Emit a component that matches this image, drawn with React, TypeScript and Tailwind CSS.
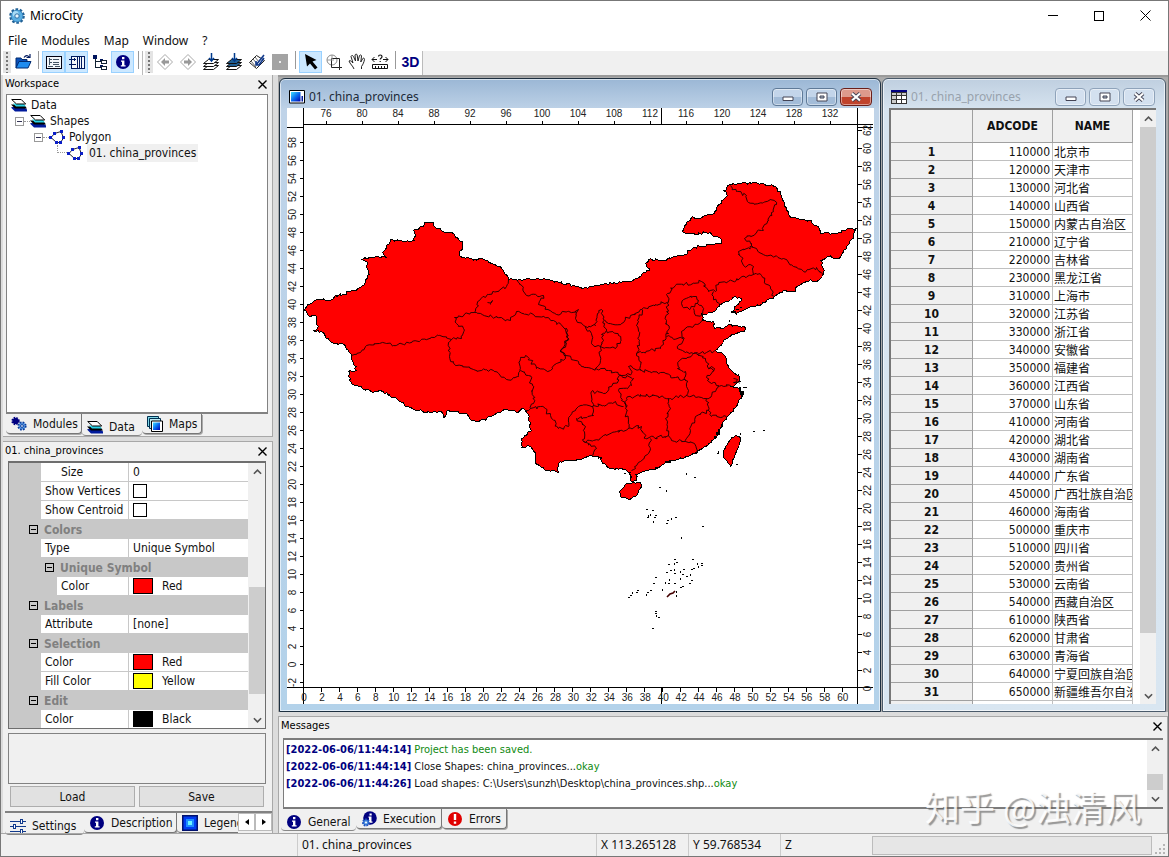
import React from "react";

type Pt = [number, number];

/* ---------- map geometry ---------- */

const MAINLAND =
  "304,310 307,304 313,301 320,299 325,300 330,300 335,295 343,294 351,290 363,285 365,279 369,274 367,268 367,262 361,259 376,256 386,257 383,254 384,250 388,244 390,239 405,241 414,240 413,230 423,226 424,222 433,222 434,226 443,231 454,234 462,244 459,255 465,258 483,259 500,266 508,279 546,279 556,281 579,287 583,288 605,283 630,281 641,275 649,270 645,263 650,258 658,260 663,260 675,256 683,255 693,247 711,244 721,243 720,238 711,234 705,232 695,234 686,233 682,231 686,222 692,216 700,218 714,213 717,205 727,195 723,190 731,184 755,182 774,186 780,193 790,217 808,220 818,226 820,233 836,233 846,229 856,228 853,236 846,246 839,258 828,256 820,260 823,268 822,276 816,281 810,279 798,285 795,291 783,290 774,296 761,304 746,308 736,314 733,310 736,305 741,298 735,296 730,300 719,304 713,311 707,313 701,313 702,320 713,321 714,328 723,328 728,324 745,327 744,331 733,334 723,342 715,350 725,356 730,369 739,377 740,381 731,386 740,389 741,395 736,406 728,415 721,426 716,436 705,446 695,453 683,458 668,461 656,468 643,471 635,474 636,480 630,480 630,472 623,469 610,468 602,463 601,457 591,455 581,459 560,461 558,463 558,472 546,470 535,463 535,455 530,446 521,447 521,438 530,431 529,416 523,408 516,412 506,409 490,416 485,420 471,420 466,413 448,410 443,417 441,411 430,412 413,409 400,401 380,390 373,392 351,383 348,371 356,370 351,355 345,345 330,341 323,332 313,330 317,328 316,316 308,315 304,310";

const ISLANDS = [
  "735,435 740,437 739,445 735,453 730,466 725,459 723,456 723,450 729,440 735,435",
  "619,491 626,483 640,482 641,486 635,496 628,499 620,496 619,491",
];

const BORDERS = [
  "351,355 360,352 366,345 386,343 393,345 420,340 438,335 451,339 461,338 463,328 456,323 454,317 474,312 479,300 488,294 506,286 508,279",
  "451,339 448,342 449,356 455,365 473,369 493,370 506,379 518,376 520,370 528,375 532,385 533,403 530,408 525,410",
  "474,312 510,320 516,311 533,314 553,320 566,328 568,338 560,351 565,358 556,363 550,370 536,368 525,355 520,358 519,370",
  "516,279 526,295 543,295 538,304 556,314 578,309 575,318 585,326 595,325 597,313 601,309 603,319 608,323 621,323 630,315 641,309 668,301",
  "585,326 591,333 591,343 600,346 615,348 620,341 618,335 606,330 603,320",
  "606,330 601,334 603,340 600,346 600,360 595,368 608,370 621,375",
  "566,328 568,338 560,351 565,355 578,361 581,366 591,368 595,368",
  "641,309 637,326 639,340 636,353 640,365 641,370",
  "668,301 666,320 668,333 660,348 636,353",
  "666,336 683,339 677,348 685,352 693,353 706,352 715,350",
  "683,339 681,331 703,320",
  "681,303 688,297 696,296 697,303 690,308 682,306 681,303",
  "697,303 701,305 702,314 695,315 693,308",
  "668,301 667,293 675,285 701,281 708,291 715,291 718,284 753,274 761,275 774,296",
  "713,291 713,296 719,303",
  "753,274 753,266 743,265 738,251 753,247 756,248 765,255 783,258 793,266 803,271 816,267 822,275",
  "730,185 736,191 746,195 748,202 763,202 770,199 776,204 768,220 761,230 744,238 751,243 753,247",
  "530,408 540,406 550,415 558,428 568,426 570,415 575,410 578,406 593,405 591,391 603,393 611,386 621,375",
  "621,375 633,378 631,385 618,390 621,400 626,406",
  "641,370 628,366 631,373 621,375",
  "641,370 660,372 675,377 685,380",
  "685,380 685,371 677,368 679,360 686,358 693,353",
  "693,353 705,358 708,368 713,370 706,377 711,383 721,385 731,386",
  "718,385 715,391 706,398",
  "685,380 688,390 686,395 706,398",
  "706,398 708,410 711,416 726,416",
  "708,410 695,416 690,430 685,441",
  "685,441 694,443 696,452",
  "626,398 640,394 658,396 670,398 686,395",
  "668,398 670,408 665,418 668,435 671,440 685,441",
  "626,398 625,408 628,428",
  "593,405 603,405 615,401 623,406",
  "593,405 593,415 576,418 585,426 583,441 596,448 591,455",
  "583,441 593,440 603,435 628,428 641,426 645,438 668,435",
  "650,438 648,453 640,461 631,470",
  "708,368 711,366 714,368 713,371",
  "733,378 737,379 733,382 739,383",
  "487,302 492,300 490,304",
];

const ISLETS: Pt[] = [
  [646, 509], [648, 515], [647, 517], [655, 515], [653, 521], [652, 510], [654, 517], [650, 514],
  [667, 520], [666, 523], [671, 518], [675, 517], [702, 526], [681, 537], [674, 559], [668, 564],
  [674, 563], [676, 562], [692, 559], [697, 563], [701, 563], [701, 565], [698, 566], [666, 572],
  [670, 570], [674, 569], [674, 573], [683, 569], [680, 571], [682, 574], [686, 576], [690, 574],
  [691, 569], [693, 568], [669, 579], [655, 577], [653, 583], [665, 582], [668, 583], [674, 583],
  [680, 578], [689, 583], [691, 580], [662, 589], [650, 590], [647, 592], [646, 594], [637, 590],
  [636, 592], [632, 592], [630, 595], [628, 597], [676, 591], [680, 587], [682, 586], [676, 595],
  [655, 611], [655, 613], [656, 615], [658, 617], [652, 628], [740, 433], [753, 431], [763, 430],
  [718, 451], [717, 453], [736, 464], [686, 473], [694, 477], [659, 487], [666, 490], [646, 509],
  [624, 473], [729, 320], [745, 387], [734, 312], [731, 311], [654, 469],
];

/* Dense archipelagos close to the coast: x, y, width, height. */
const CLUSTERS: [number, number, number, number][] = [
  [740, 391, 4, 4], [741, 394, 2, 3], [743, 387, 4, 1], [739, 387, 2, 2], [716, 432, 4, 3],
  [718, 429, 2, 3], [714, 436, 3, 2], [721, 424, 2, 3], [665, 461, 6, 2], [670, 460, 4, 1],
  [655, 467, 3, 2], [695, 452, 2, 2], [732, 311, 4, 2], [736, 309, 3, 1], [740, 307, 2, 1],
];

function parse(s: string): Pt[] {
  return s.split(" ").map((p) => p.split(",").map(Number) as Pt);
}

/* Adds small deterministic bends so that coasts and borders look natural. */
function roughen(source: string, amp: number, seed: number): string {
  let state = seed * 7919 + 17;
  const rnd = () => {
    state = (state * 1103515245 + 12345) % 2147483648;
    return state / 2147483648 - 0.5;
  };
  const pts = parse(source);
  const out: string[] = [pts[0].join(",")];
  for (let i = 1; i < pts.length; i++) {
    const [ax, ay] = pts[i - 1];
    const [bx, by] = pts[i];
    const len = Math.hypot(bx - ax, by - ay);
    const n = Math.max(1, Math.round(len / 2.2));
    for (let k = 1; k < n; k++) {
      const t = k / n;
      const x = ax + (bx - ax) * t + rnd() * amp;
      const y = ay + (by - ay) * t + rnd() * amp;
      out.push(`${x.toFixed(1)},${y.toFixed(1)}`);
    }
    out.push(`${bx},${by}`);
  }
  return out.join(" ");
}

const range = (from: number, to: number, step: number) =>
  Array.from({ length: Math.floor((to - from) / step) + 1 }, (_, i) => from + i * step);

function MapCanvas() {
  return (
    <svg viewBox="287 108 587 596" className="block h-full w-full bg-white" preserveAspectRatio="xMinYMin meet" role="img" aria-label="china_provinces">
      <g shapeRendering="crispEdges">
        <polygon points={roughen(MAINLAND, 2.4, 3)} fill="#f00" stroke="#000" strokeWidth="1" transform="translate(.5 .5)" />
        {ISLANDS.map((s, i) => (
          <polygon key={i} points={roughen(s, 1.2, i + 5)} fill="#f00" stroke="#000" strokeWidth="1" transform="translate(.5 .5)" />
        ))}
      </g>
      {BORDERS.map((s, i) => (
        <polyline key={i} points={roughen(s, 3.4, i + 11)} fill="none" stroke="#1c0000" strokeWidth=".9" transform="translate(.5 .5)" />
      ))}
      <path d="M667 597l3-3 3-1 2-2" stroke="#400" strokeWidth="1.6" fill="none" />
      <g shapeRendering="crispEdges" fill="#000">
        {ISLETS.map(([x, y], i) => (
          <rect key={i} x={x} y={y} width={i % 3 === 1 ? 1 : 2} height={i % 3 === 1 ? 2 : 1} />
        ))}
        {CLUSTERS.map(([x, y, w, h], i) => (
          <rect key={i} x={x} y={y} width={w} height={h} />
        ))}
      </g>
      <g stroke="#000" strokeWidth="1" shapeRendering="crispEdges" fill="none">
        <path d="M303.5 108V704M857.5 108V704M287 687.5H873M303 124.5H873M287 127.5H303M857 127.5H873M661.5 108V124M661.5 687V704" />
        {range(76, 132, 4).map((v) => (
          <path key={`t${v}`} d={`M${326.5 + (v - 76) * 9} 121V124`} />
        ))}
        {range(0, 60, 2).map((v) => (
          <path key={`b${v}`} d={`M${Math.round(303 + v * 8.98) + 0.5} 688V692`} />
        ))}
        {range(-2, 58, 2).map((v) => (
          <path key={`l${v}`} d={`M300 ${142.5 + (58 - v) * 9}H303`} />
        ))}
        {range(0, 62, 2).map((v) => (
          <path key={`r${v}`} d={`M858 ${148.5 + (60 - v) * 9 - (v === 0 ? 1 : 0)}H862`} />
        ))}
      </g>
      <g className="font-['Liberation_Sans',sans-serif] text-[10px]" fill="#222" textAnchor="middle">
        {range(76, 132, 4).map((v) => (
          <text key={`t${v}`} x={326 + (v - 76) * 9} y="117">{v}</text>
        ))}
        {range(0, 60, 2).map((v) => (
          <text key={`b${v}`} x={304 + v * 8.98} y="701">{v}</text>
        ))}
        {range(-2, 58, 2).map((v) => (
          <text key={`l${v}`} transform={`translate(296 ${142.5 + (58 - v) * 9}) rotate(-90)`}>{v}</text>
        ))}
        {range(0, 62, 2).map((v) => (
          <text key={`r${v}`} transform={`translate(871 ${148.5 + (60 - v) * 9}) rotate(-90)`}>{v}</text>
        ))}
      </g>
    </svg>
  );
}

/* ---------- icons ---------- */

function GearIcon({ className }: { className: string }) {
  return (
    <svg viewBox="0 0 16 16" className={className} aria-hidden="true">
      <circle cx="8" cy="8" r="6.6" fill="none" stroke="#1f5f94" strokeWidth="2.4" strokeDasharray="2.6 1.6" />
      <circle cx="8" cy="8" r="5.9" fill="#5aaee2" stroke="#2b78b4" strokeWidth=".8" />
      <circle cx="6.6" cy="6" r="3" fill="#a9dcf6" />
      <circle cx="8" cy="8" r="2.2" fill="#eaf6fd" stroke="#2b6ea6" />
    </svg>
  );
}

function InfoIcon({ className = "size-4" }: { className?: string }) {
  return (
    <svg viewBox="0 0 16 16" className={className} aria-hidden="true">
      <circle cx="8" cy="8" r="7" fill="#000080" />
      <path d="M7 3h2.4v2.2H7zM6 6.4h3.4v4.8h1.2v1.4H5.8v-1.4H7V7.8H6z" fill="#fff" />
    </svg>
  );
}

function LayersIcon({ arrow = false, fill = "#fff" }: { arrow?: boolean; fill?: string }) {
  return (
    <svg viewBox="0 0 18 18" className="size-[18px]" aria-hidden="true">
      <g stroke="#111" strokeWidth="1" fill="#fff">
        <path d="M1.5 16.5l5-4h10l-5 4z" />
        <path d="M1.5 13.5l5-4h10l-5 4z" fill={fill} />
        <path d="M1.5 10.5l5-4h10l-5 4z" fill={fill} />
      </g>
      {arrow && <path d="M9.500 0v7M7 5l2.500 3L12 5" stroke="#003a8c" strokeWidth="1.500" fill="none" />}
    </svg>
  );
}

function DataIcon() {
  return (
    <svg viewBox="0 0 16 14" className="h-3.5 w-4 shrink-0" aria-hidden="true">
      <path d="M0 9.500l4 4h12v-2l-4-3H3z" fill="#001a9c" />
      <path d="M0 6.500l4 4h12l-3-4z" fill="#000" />
      <path d="M2 5.500l3 3h10l-3-3z" fill="#2ad4e8" />
      <path d="M.7 1.500h9.500l4.500 4.500H5.500z" fill="#fff" stroke="#000" strokeWidth="1" />
    </svg>
  );
}

function PolygonIcon() {
  return (
    <svg viewBox="0 0 16 16" className="size-4 shrink-0" aria-hidden="true">
      <path d="M2 8.5l3.500-4 6.500-2 2.500 6.500-3 4.500h-4z" fill="#fff" stroke="#223" />
      <g shapeRendering="crispEdges" fill="#0a1ec8">
        <path d="M0 7h3v3H0zM4 3h3v3H4zM11 1h3v3h-3zM13 7h3v3h-3zM10 12h3v3h-3zM6 12h3v3H6z" />
      </g>
    </svg>
  );
}

function MapIcon() {
  return (
    <svg viewBox="0 0 16 14" className="h-3.5 w-4 shrink-0" aria-hidden="true">
      <defs>
        <linearGradient id="mapBlue" x1="0" y1="0" x2="1" y2="1">
          <stop offset="0" stopColor="#3fe0ff" />
          <stop offset=".5" stopColor="#0a6cf0" />
          <stop offset="1" stopColor="#0000b0" />
        </linearGradient>
      </defs>
      <path d="M.5.5h15v12.500H.5z" fill="#fff" stroke="#000" />
      <path d="M2 2h9.500v9.500H2z" fill="url(#mapBlue)" />
      <path d="M12.500 6h1.500v5.500h-1.500z" fill="#001a9c" />
    </svg>
  );
}

function MapsIcon() {
  return (
    <svg viewBox="0 0 16 16" className="size-4 shrink-0" aria-hidden="true">
      <path d="M.5.500h11v10H.5z" fill="#7fd8e8" stroke="#003050" />
      <path d="M2.500 2.500h11v10h-11z" fill="#bfeaf4" stroke="#003050" />
      <path d="M4.500 5h11v10.500h-11z" fill="#fff" stroke="#000" />
      <path d="M6 6.500h7v7.500H6z" fill="url(#mapBlue)" />
    </svg>
  );
}

function ModulesIcon() {
  return (
    <svg viewBox="0 0 16 16" className="size-4 shrink-0" aria-hidden="true">
      <circle cx="4.500" cy="5" r="3.100" fill="#000080" stroke="#000080" strokeWidth="2.200" strokeDasharray="1.500 1" />
      <circle cx="4.500" cy="5" r="2.600" fill="#000080" />
      <circle cx="11" cy="10" r="3.400" fill="#4a90e0" stroke="#0a3c9c" strokeWidth="2.400" strokeDasharray="1.600 1.100" />
      <circle cx="11" cy="10" r="2.800" fill="#5a9ce8" />
      <circle cx="11" cy="10" r="1.400" fill="#fff" stroke="#0a3c9c" />
    </svg>
  );
}

function SettingsIcon() {
  return (
    <svg viewBox="0 0 16 16" className="size-4 shrink-0" shapeRendering="crispEdges" aria-hidden="true">
      <path d="M0 3.500h16M0 8.500h16M0 13.500h16" stroke="#123a8c" strokeWidth="1.200" />
      <path d="M10.500 1.500h2v4h-2zM3.500 6.500h2v4h-2zM10.500 11.500h2v4h-2z" fill="#fff" stroke="#123a8c" />
    </svg>
  );
}

function LegendIcon() {
  return (
    <svg viewBox="0 0 16 16" className="size-4 shrink-0" aria-hidden="true">
      <path d="M0 0h16v16H0z" fill="#00106e" />
      <path d="M1.500 1.500h13v13h-13z" fill="#003cf0" />
      <path d="M4 4h8v8H4z" fill="#1c8cff" />
      <path d="M6 6h4v4H6z" fill="#6cf4ff" />
    </svg>
  );
}

function ExecutionIcon() {
  return (
    <svg viewBox="0 0 16 16" className="size-4 shrink-0" aria-hidden="true">
      <circle cx="9" cy="7" r="6.800" fill="#000080" />
      <path d="M8.500 2.500h2.200v2H8.500zM7.500 5.500h3v5h1v1.200H8V6.800h-.5z" fill="#fff" />
      <circle cx="5" cy="11.500" r="3" fill="#4a90e0" stroke="#1c50c0" strokeWidth="2" strokeDasharray="1.600 1" />
      <circle cx="5" cy="11.500" r="1" fill="#fff" />
    </svg>
  );
}

function ErrorIcon() {
  return (
    <svg viewBox="0 0 16 16" className="size-4 shrink-0" aria-hidden="true">
      <circle cx="8" cy="8" r="7" fill="#e00000" />
      <path d="M6.800 3h2.400v6H6.800zM6.800 10.500h2.400v2.200H6.800z" fill="#fff" />
    </svg>
  );
}

function TableIcon() {
  return (
    <svg viewBox="0 0 16 14" className="h-3.5 w-4 shrink-0" shapeRendering="crispEdges" aria-hidden="true">
      <path d="M0 0h16v14H0z" fill="#333" />
      <path d="M0 0h16v2H0z" fill="#000080" />
      <path d="M1 3h4v2H1zM6 3h4v2H6zM11 3h4v2h-4zM1 6h4v3H1zM1 10h4v3H1z" fill="#ccc" />
      <path d="M6 6h4v3H6zM11 6h4v3h-4zM6 10h4v3H6zM11 10h4v3h-4z" fill="#fff" />
    </svg>
  );
}

const tool = "size-[18px]";

const icons = {
  open: (
    <svg viewBox="0 0 18 18" className={tool}>
      <path d="M2 15V5h5l1 1.500h5V9" fill="#0a50b8" stroke="#002a70" />
      <path d="M2 15l3-6.500h12L14 15z" fill="#1f8cf0" stroke="#002a70" />
      <path d="M10 4.500c2-3 4-2 5-.5M16 1v3.500h-3.500" fill="none" stroke="#001a60" strokeWidth="1.200" />
    </svg>
  ),
  list: (
    <svg viewBox="0 0 18 18" className={tool} shapeRendering="crispEdges">
      <path d="M1.500 3.500h15v12h-15z" fill="#f4f8fc" stroke="#001" />
      <path d="M4.500 5v7M5 6.500h2M5 9.500h2M8 6.500h6M8 9.500h6M8 11.500h6M3 13.500h5M10 13.500h5" stroke="#456" strokeWidth="1" fill="none" />
    </svg>
  ),
  props: (
    <svg viewBox="0 0 18 18" className={tool} shapeRendering="crispEdges">
      <path d="M3.500 3.500h13v12h-13z" fill="#f4f8fc" stroke="#001a60" />
      <path d="M1 6.500h7M1 11.500h7M6.500 5v3M3.500 10v3M9.500 4v11M11.500 4v11M13.500 4v11" stroke="#001a60" />
    </svg>
  ),
  tree: (
    <svg viewBox="0 0 18 18" className={tool} shapeRendering="crispEdges">
      <path d="M4.500 5v9.500h5M4.500 8.500h5" stroke="#123" fill="none" />
      <path d="M2 2h4v4H2zM9 6h3v2H9zM9 12h3v2H9z" fill="#00145c" />
      <path d="M10.500 7.500h5v3h-5zM10.500 13.500h5v3h-5z" fill="#fff" stroke="#123" />
    </svg>
  ),
  hand: (
    <svg viewBox="0 0 18 18" className={tool}>
      <path d="M6 16c-1-3-4-5-5-8 1-1 2 0 4 2L3 3.500c.5-1.500 2-1 2.500 0L7.500 8 7 2c.5-1.200 2-1 2.200 0L10 8l1.500-5.500c.8-1 2-.5 2 .5L12.800 9l2-3.500c.8-.8 1.800-.2 1.700.8-.5 3-1.500 5-3 7.200V16" fill="#fff" stroke="#222" strokeWidth="1" />
    </svg>
  ),
  cursor: (
    <svg viewBox="0 0 18 18" className={tool}>
      <path d="M3 1l2 12.500 3-3 5 6 2.500-2-5-6 4-1.500z" fill="#000" />
    </svg>
  ),
  zoom: (
    <svg viewBox="0 0 18 18" className={tool} fill="none">
      <circle cx="7" cy="7" r="5" stroke="#888" />
      <path d="M6.500 5.500h8v9h-8zM14.500 14.500V17M14.500 14.500H17" stroke="#222" />
      <path d="M2 7h7M7 2v4" stroke="#999" />
    </svg>
  ),
  measure: (
    <svg viewBox="0 0 18 18" className={tool} fill="none">
      <path d="M1.500 11.500h15v4h-15z" stroke="#111" />
      <path d="M4.500 13v2M7.500 13v2M10.500 13v2M13.500 13v2M1 6.500h5M12 6.500h5M3.500 4L1 6.500 3.500 9M14.500 4L17 6.500 14.500 9" stroke="#111" />
      <path d="M7.500 3.500c0-2 3.500-2 3.500 0S9.200 5 9.200 6.500M9.200 8v1" stroke="#111" strokeWidth="1.200" />
    </svg>
  ),
  brush: (
    <svg viewBox="0 0 18 18" className={tool}>
      <path d="M1.500 9.500l7-7 8 5-8 8z" fill="#fff" stroke="#222" />
      <path d="M3 8l5 6M5 6l5 6M7 4l4 5" stroke="#444" strokeWidth=".8" />
      <path d="M16 2l-8 10M16 5l-5 7M8 8v4h4" stroke="#123a8c" strokeWidth="1.600" fill="none" />
    </svg>
  ),
  block: (
    <svg viewBox="0 0 18 18" className={tool} shapeRendering="crispEdges">
      <path d="M1 1h16v16H1z" fill="#a3a3a3" />
      <path d="M8 8h2v2H8z" fill="#eee" />
    </svg>
  ),
};

function DiamondArrow({ right = false }: { right?: boolean }) {
  return (
    <svg viewBox="0 0 18 18" className="size-[18px]" aria-hidden="true">
      <path d="M9 1.500L16.500 9 9 16.500 1.500 9z" fill="none" stroke="#aaa" />
      <path d={right ? "M5 7.500h4V5l4 4-4 4v-2.500H5z" : "M13 7.500H9V5L5 9l4 4v-2.500h4z"} fill="#999" />
    </svg>
  );
}

function CloseIcon({ className = "size-[11px]" }: { className?: string }) {
  return (
    <svg viewBox="0 0 11 11" className={className} aria-hidden="true">
      <path d="M1.500 1.500l8 8M9.500 1.500l-8 8" stroke="#000" strokeWidth="1.400" />
    </svg>
  );
}

function Chevron({ down = false }: { down?: boolean }) {
  return (
    <svg viewBox="0 0 10 6" className="h-1.5 w-[9px]" aria-hidden="true">
      <path d={down ? "M1 1l4 4 4-4" : "M1 5l4-4 4 4"} fill="none" stroke="#555" strokeWidth="1.800" />
    </svg>
  );
}

/* ---------- shared pieces ---------- */

const TAHOMA = "font-['DejaVu_Sans_Condensed','DejaVu_Sans',sans-serif]";
const SEGOE = "font-['Noto_Sans','Open_Sans',sans-serif]";

function ScrollBar({ thumb }: { thumb: string }) {
  return (
    <div className="flex w-4 shrink-0 flex-col bg-[#f0f0f0]">
      <button aria-label="Scroll up" className="flex h-[17px] items-center justify-center"><Chevron /></button>
      <div className="relative flex-1"><div className={`absolute inset-x-0 bg-[#cdcdcd] ${thumb}`} /></div>
      <button aria-label="Scroll down" className="flex h-[17px] items-center justify-center"><Chevron down /></button>
    </div>
  );
}

function ToolButton({ label, active = false, children }: { label: string; active?: boolean; children: React.ReactNode }) {
  return (
    <button
      aria-label={label}
      className={`flex h-[22px] w-[23px] items-center justify-center ${active ? "border border-[#99d1ff] bg-[#cce8ff]" : ""}`}
    >
      {children}
    </button>
  );
}

function Grip() {
  return <div className="h-[22px] w-2 bg-[#e4e4e4] bg-[radial-gradient(circle,#777_1px,transparent_1px)] bg-[length:8px_4px]" />;
}

function ToolSep() {
  return <div className="flex w-2 justify-center"><div className="h-[18px] w-px bg-[#999]" /></div>;
}

function PanelHeader({ title }: { title: string }) {
  return (
    <div className="flex h-[18px] shrink-0 items-center justify-between pl-0.5 pr-1 pt-px text-[11px] text-black">
      <h2>{title}</h2>
      <button aria-label={`Close ${title}`}><CloseIcon /></button>
    </div>
  );
}

function Tab({ label, active = false, className = "", children }: { label: string; active?: boolean; className?: string; children: React.ReactNode }) {
  return (
    <button
      className={`flex shrink-0 items-center gap-1.5 overflow-hidden whitespace-nowrap rounded-b-sm pl-[5px] ${
        active ? "h-[22px] border-b border-[#888] bg-[#f0f0f0] pt-1" : "h-[20px] border-b border-r border-[#777] bg-[#f0f0f0] shadow-[1px_1px_0_#aaa]"
      } ${className}`}
    >
      {children}
      <span>{label}</span>
    </button>
  );
}

/* ---------- workspace ---------- */

function TreeToggle() {
  return (
    <span className="flex size-[9px] shrink-0 items-center justify-center border border-[#999] bg-white">
      <span className="h-px w-[5px] bg-[#335]" />
    </span>
  );
}

function Workspace() {
  return (
    <section className="flex h-[362px] shrink-0 flex-col border-b border-r border-[#a8a8a8] bg-[#f0f0f0]">
      <PanelHeader title="Workspace" />
      <div className="ml-[3px] mr-1 mt-px flex min-h-0 flex-1 flex-col">
        <ul className="flex-1 border border-b-2 border-[#828282] bg-white pt-0.5">
          <li className="flex h-4 items-center gap-1 pl-1"><DataIcon />Data</li>
          <li className="flex h-4 items-center pl-2">
            <TreeToggle /><span className="w-1.5 border-t border-dotted border-[#999]" />
            <DataIcon /><span className="ml-1">Shapes</span>
          </li>
          <li className="flex h-4 items-center pl-[27px]">
            <TreeToggle /><span className="w-1.5 border-t border-dotted border-[#999]" />
            <PolygonIcon /><span className="ml-1">Polygon</span>
          </li>
          <li className="flex h-4 items-center pl-[50px]">
            <span className="mb-2 h-2 w-2.5 border-b border-l border-dotted border-[#999]" />
            <PolygonIcon /><span className="ml-1 bg-[#f0f0f0] px-0.5">01. china_provinces</span>
          </li>
        </ul>
        <div className="flex h-[22px] items-start">
          <Tab label="Modules" className="w-[76px]"><ModulesIcon /></Tab>
          <Tab label="Data" active className="w-[60px]"><DataIcon /></Tab>
          <Tab label="Maps" className="w-[60px]"><MapsIcon /></Tab>
        </div>
      </div>
    </section>
  );
}

/* ---------- settings ---------- */

type Row =
  | { kind: "group"; label: string; depth: number }
  | { kind: "value"; label: string; depth: number; nested?: boolean; value: React.ReactNode };

function Swatch({ color, name }: { color: string; name: string }) {
  return (
    <>
      <span className={`mr-[9px] h-4 w-5 border border-black ${color}`} />
      {name}
    </>
  );
}

function PropCheck({ id }: { id: string }) {
  return <input type="checkbox" id={id} className="size-3.5 appearance-none border border-black bg-white checked:bg-black" />;
}

const ROWS: Row[] = [
  { kind: "value", label: "Size", depth: 0, nested: true, value: "0" },
  { kind: "value", label: "Show Vertices", depth: 0, value: <PropCheck id="show-vertices" /> },
  { kind: "value", label: "Show Centroid", depth: 0, value: <PropCheck id="show-centroid" /> },
  { kind: "group", label: "Colors", depth: 0 },
  { kind: "value", label: "Type", depth: 0, value: "Unique Symbol" },
  { kind: "group", label: "Unique Symbol", depth: 1 },
  { kind: "value", label: "Color", depth: 1, value: <Swatch color="bg-[#f00]" name="Red" /> },
  { kind: "group", label: "Labels", depth: 0 },
  { kind: "value", label: "Attribute", depth: 0, value: "[none]" },
  { kind: "group", label: "Selection", depth: 0 },
  { kind: "value", label: "Color", depth: 0, value: <Swatch color="bg-[#f00]" name="Red" /> },
  { kind: "value", label: "Fill Color", depth: 0, value: <Swatch color="bg-[#ff0]" name="Yellow" /> },
  { kind: "group", label: "Edit", depth: 0 },
  { kind: "value", label: "Color", depth: 0, value: <Swatch color="bg-black" name="Black" /> },
];

function PropertyRow({ row }: { row: Row }) {
  if (row.kind === "group") {
    return (
      <div className={`flex h-[19px] items-center font-bold text-[#808080] ${row.depth ? "pl-9" : "pl-5"}`}>
        <span className="mr-[6px] flex size-[9px] items-center justify-center border border-black">
          <span className="h-px w-[5px] bg-black" />
        </span>
        {row.label}
      </div>
    );
  }
  const cells = (
    <>
      <span className={`flex shrink-0 items-center whitespace-nowrap border-r border-[#c8c8c8] ${row.depth ? "w-[72px]" : "w-[88px]"} ${row.nested ? "pl-5" : "pl-1"}`}>{row.label}</span>
      <span className="flex items-center pl-1">{row.value}</span>
    </>
  );
  const line = "flex flex-1 border-b border-[#c8c8c8] bg-white text-[#111]";
  const isCheck = row.label.startsWith("Show");
  return (
    <div className={`flex h-[19px] ${row.depth ? "pl-12" : "pl-8"}`}>
      {isCheck ? (
        <label htmlFor={row.label.toLowerCase().replace(" ", "-")} className={line}>{cells}</label>
      ) : (
        <div className={line}>{cells}</div>
      )}
    </div>
  );
}

function Settings() {
  return (
    <section className="mt-1 flex min-h-0 flex-1 flex-col border-r border-t border-[#a8a8a8] bg-[#f0f0f0]">
      <PanelHeader title="01. china_provinces" />
      <div className="ml-[5px] mr-1.5 mt-px flex min-h-0 flex-1 flex-col">
        <div className="flex h-[268px] shrink-0 overflow-hidden border border-t-2 border-[#6e6e6e]">
          <div className="flex-1 bg-[#c8c8c8]">
            {ROWS.map((row, i) => <PropertyRow key={i} row={row} />)}
          </div>
          <div className="flex pl-px"><ScrollBar thumb="top-[107px] bottom-[17px]" /></div>
        </div>
        <div className="mt-1 h-[51px] shrink-0 border border-[#828282]" />
        <div className="mt-0.5 flex gap-1 px-0.5">
          <button className="h-[21px] flex-1 border border-[#adadad] bg-[#e1e1e1]">Load</button>
          <button className="h-[21px] flex-1 border border-[#adadad] bg-[#e1e1e1]">Save</button>
        </div>
      </div>
      <div className="ml-0.5 flex h-[22px] items-start border-t-2 border-[#828282]">
        <Tab label="Settings" active className="w-[79px]"><SettingsIcon /></Tab>
        <Tab label="Description" className="w-[93px]"><InfoIcon className="size-4 shrink-0" /></Tab>
        <div className="flex flex-1 overflow-hidden"><Tab label="Legend" className="w-[70px]"><LegendIcon /></Tab></div>
        <button aria-label="Previous tabs" className="flex h-[18px] w-[17px] items-center justify-center border border-[#bbb] bg-white">
          <svg viewBox="0 0 4 6" className="h-1.5 w-1"><path d="M4 0v6L0 3z" /></svg>
        </button>
        <button aria-label="Next tabs" className="flex h-[18px] w-[17px] items-center justify-center border border-[#bbb] bg-white">
          <svg viewBox="0 0 4 6" className="h-1.5 w-1"><path d="M0 0v6l4-3z" /></svg>
        </button>
      </div>
    </section>
  );
}

/* ---------- document windows ---------- */

function CaptionButtons({ active }: { active: boolean }) {
  const base = active
    ? "border-[#5f7a98] bg-linear-to-b from-[#c3d5ea] from-50% to-[#a3bcd8] to-50%"
    : "border-[#8fa3ba] bg-[#d3e0ef]";
  const ring = "flex h-[18px] items-center justify-center rounded-sm border shadow-[inset_0_0_0_1px_rgba(255,255,255,.45)]";
  return (
    <div className="flex gap-[3px]">
      <button aria-label="Minimize" className={`${ring} w-[31px] ${base}`}>
        <svg viewBox="0 0 12 6" className="mt-1 h-1.5 w-3"><path d="M1 1h10v3.500H1z" fill="#fff" stroke="#445" /></svg>
      </button>
      <button aria-label="Maximize" className={`${ring} w-[31px] ${base}`}>
        <svg viewBox="0 0 12 10" className="h-2.5 w-3"><path d="M1 1h10v8H1z" fill="#fff" stroke="#445" /><path d="M4 4h4v2H4z" fill="#abc" stroke="#445" /></svg>
      </button>
      <button aria-label="Close" className={`${ring} w-8 ${active ? "border-[#6b1f1a] bg-linear-to-b from-[#dd9a8c] from-50% to-[#c0432c] to-50%" : base}`}>
        <svg viewBox="0 0 12 10" className="h-2.5 w-3">
          <path d="M2 1.500l8 7M10 1.500l-8 7" stroke="#445" strokeWidth="4" />
          <path d="M2 1.500l8 7M10 1.500l-8 7" stroke="#fff" strokeWidth="2.200" />
        </svg>
      </button>
    </div>
  );
}

function MapWindow() {
  return (
    <section className="flex min-w-0 flex-1 flex-col rounded-t-md border border-[#1d2f40] bg-linear-to-b from-[#9bb7d5] via-[#bfd3e8] via-5% to-[#b3d2ea] pb-[7px] pl-[7px] pr-1.5 shadow-[inset_0_0_0_1px_rgba(255,255,255,.6)]">
      <header className="flex h-[29px] shrink-0 items-center justify-between pl-0.5 pr-0.5 pt-1.5">
        <div className="flex items-center gap-1"><MapIcon /><h2 className={`${SEGOE} text-[12px] text-[#1c2a38]`}>01. china_provinces</h2></div>
        <CaptionButtons active />
      </header>
      <div className="min-h-0 flex-1 bg-white"><MapCanvas /></div>
    </section>
  );
}

const PROVINCES: [number, string][] = [
  [110000, "北京市"], [120000, "天津市"], [130000, "河北省"], [140000, "山西省"], [150000, "内蒙古自治区"],
  [210000, "辽宁省"], [220000, "吉林省"], [230000, "黑龙江省"], [310000, "上海市"], [320000, "江苏省"],
  [330000, "浙江省"], [340000, "安徽省"], [350000, "福建省"], [360000, "江西省"], [370000, "山东省"],
  [410000, "河南省"], [420000, "湖北省"], [430000, "湖南省"], [440000, "广东省"], [450000, "广西壮族自治区"],
  [460000, "海南省"], [500000, "重庆市"], [510000, "四川省"], [520000, "贵州省"], [530000, "云南省"],
  [540000, "西藏自治区"], [610000, "陕西省"], [620000, "甘肃省"], [630000, "青海省"], [640000, "宁夏回族自治区"],
  [650000, "新疆维吾尔自治区"],
];

function TableWindow() {
  return (
    <section className="flex w-[284px] shrink-0 flex-col rounded-t-md border border-[#4a5a6a] bg-linear-to-b from-[#bfcfe0] via-[#d7e4f0] via-5% to-[#d9e6f1] px-1.5 pb-[7px] shadow-[inset_0_0_0_1px_rgba(255,255,255,.6)]">
      <header className="flex h-[29px] shrink-0 items-center justify-between pl-0.5 pr-1 pt-1.5">
        <div className="flex items-center gap-1"><TableIcon /><h2 className={`${SEGOE} text-[12px] text-[#98a2ad]`}>01. china_provinces</h2></div>
        <CaptionButtons active={false} />
      </header>
      <div className="mr-[3px] flex min-h-0 flex-1 overflow-hidden border-l-2 border-t-2 border-[#777] bg-white">
        <div className="min-w-0 flex-1 overflow-hidden">
          <table className="w-[242px] table-fixed border-separate border-spacing-0">
            <colgroup><col className="w-[82px]" /><col className="w-20" /><col className="w-20" /></colgroup>
            <thead>
              <tr className="h-[33px] bg-[#f0f0f0]">
                <th className="border-b border-r border-[#a0a0a0]" />
                <th className="border-b border-r border-[#a0a0a0] font-bold">ADCODE</th>
                <th className="border-b border-r border-[#a0a0a0] font-bold">NAME</th>
              </tr>
            </thead>
            <tbody>
              {PROVINCES.map(([code, name], i) => (
                <tr key={code} className="h-[18px] leading-4">
                  <th className="h-[18px] border-b border-r border-[#a0a0a0] bg-[#f0f0f0] p-0 font-bold">{i + 1}</th>
                  <td className="border-b border-r border-[#c0c0c0] p-0 pr-0.5 text-right">{code}</td>
                  <td className="overflow-hidden whitespace-nowrap border-b border-r border-[#c0c0c0] p-0 pl-px font-['Noto_Sans_CJK_SC',sans-serif]">{name}</td>
                </tr>
              ))}
              <tr className="h-[18px]">
                <th className="border-r border-[#a0a0a0] bg-[#f0f0f0] p-0" />
                <td className="border-r border-[#c0c0c0] p-0" />
                <td className="border-r border-[#c0c0c0] p-0" />
              </tr>
            </tbody>
          </table>
        </div>
        <ScrollBar thumb="top-0 bottom-[54px]" />
      </div>
    </section>
  );
}

/* ---------- messages ---------- */

function Messages() {
  const stamp = "font-bold text-[#000080]";
  return (
    <section className="relative mt-1 flex h-[117px] shrink-0 flex-col border border-b-0 border-[#a8a8a8] bg-[#f0f0f0]">
      <PanelHeader title="Messages" />
      <div className="mx-1 mt-[3px] flex h-[71px] border-b-2 border-l border-t-2 border-[#7c7c7c] bg-white">
        <div className="flex-1 pl-0.5 pt-px text-[11px] leading-[17px]">
          <p><span className={stamp}>[2022-06-06/11:44:14]</span> <span className="text-[#108a10]">Project has been saved.</span></p>
          <p><span className={stamp}>[2022-06-06/11:44:14]</span> Close Shapes: china_provinces...<span className="text-[#108a10]">okay</span></p>
          <p><span className={stamp}>[2022-06-06/11:44:26]</span> Load shapes: C:\Users\sunzh\Desktop\china_provinces.shp...<span className="text-[#108a10]">okay</span></p>
        </div>
        <ScrollBar thumb="bottom-0 h-4" />
      </div>
      <div className="flex items-start pl-0.5">
        <Tab label="General" active className="w-[75px]"><InfoIcon className="size-4 shrink-0" /></Tab>
        <Tab label="Execution" className="w-[86px]"><ExecutionIcon /></Tab>
        <Tab label="Errors" className="w-[65px]"><ErrorIcon /></Tab>
      </div>
      <div className="pointer-events-none absolute bottom-0.5 right-[26px] whitespace-nowrap font-['Noto_Sans_CJK_SC',sans-serif] text-[35px] leading-[50px] text-white/85 [text-shadow:2px_2px_1px_rgba(90,90,90,.6)]">知乎 @浊清风</div>
    </section>
  );
}

/* ---------- application ---------- */

export default function App() {
  return (
    <div className={`flex h-screen w-full flex-col overflow-hidden border border-[#777] bg-[#f0f0f0] text-[12px] text-[#111] ${TAHOMA}`}>
      <header className={`flex h-[29px] shrink-0 items-center bg-white pl-2 ${SEGOE}`}>
        <GearIcon className="size-4" />
        <h1 className="ml-[5px] flex-1 text-[12px] text-black">MicroCity</h1>
        <button aria-label="Minimize" className="flex h-full w-[46px] items-center justify-center"><span className="h-px w-2.5 bg-black" /></button>
        <button aria-label="Maximize" className="flex h-full w-[46px] items-center justify-center"><span className="size-2.5 border border-black" /></button>
        <button aria-label="Close" className="flex h-full w-[46px] items-center justify-center">
          <svg viewBox="0 0 11 11" className="size-[11px]"><path d="M.5.500l10 10M10.500.500l-10 10" stroke="#000" /></svg>
        </button>
      </header>
      <nav className={`flex h-[21px] shrink-0 items-center gap-[14px] bg-white pl-[7px] text-[12px] ${SEGOE}`}>
        <button>File</button>
        <button>Modules</button>
        <button>Map</button>
        <button>Window</button>
        <button>?</button>
      </nav>
      <div className="flex h-6 shrink-0 items-start">
        <div className="flex h-full items-start bg-white pl-0.5">
          <Grip />
          <ToolButton label="Open">{icons.open}</ToolButton>
          <ToolSep />
          <ToolButton label="Workspace" active>{icons.list}</ToolButton>
          <ToolButton label="Properties" active>{icons.props}</ToolButton>
          <ToolButton label="Tree">{icons.tree}</ToolButton>
          <ToolButton label="Messages" active><InfoIcon /></ToolButton>
          <ToolSep />
        </div>
        <div className="flex h-full items-start border-l border-r border-[#bbb] bg-white pl-0.5">
          <Grip />
          <ToolButton label="Previous extent"><DiamondArrow /></ToolButton>
          <ToolButton label="Next extent"><DiamondArrow right /></ToolButton>
          <ToolButton label="Full extent"><LayersIcon arrow /></ToolButton>
          <ToolButton label="Layer extent"><LayersIcon arrow fill="#1f5f94" /></ToolButton>
          <ToolButton label="Selection extent">{icons.brush}</ToolButton>
          <ToolButton label="Synchronize">{icons.block}</ToolButton>
          <ToolSep />
          <ToolButton label="Action" active>{icons.cursor}</ToolButton>
          <ToolButton label="Zoom">{icons.zoom}</ToolButton>
          <ToolButton label="Pan">{icons.hand}</ToolButton>
          <ToolButton label="Measure">{icons.measure}</ToolButton>
          <ToolSep />
          <ToolButton label="3D view"><span className="font-['Liberation_Sans',sans-serif] text-[14px] font-bold leading-none text-[#000080]">3D</span></ToolButton>
        </div>
      </div>
      <main className="flex min-h-0 flex-1 gap-[5px] bg-[#dcdcdc]">
        <div className="flex w-[272px] shrink-0 flex-col pl-0.5">
          <Workspace />
          <Settings />
        </div>
        <div className="flex min-w-0 flex-1 flex-col">
          <div className="flex min-h-0 flex-1 gap-px border-t-2 border-[#9a9a9a] bg-[#ababab] pl-px pr-0.5 pt-px">
            <MapWindow />
            <TableWindow />
          </div>
          <Messages />
        </div>
      </main>
      <footer className={`flex h-[23px] shrink-0 items-center border-t border-[#a8a8a8] text-[12px] ${SEGOE}`}>
        <div className="h-full w-[296px]" />
        <div className="h-full flex-1 border-l border-[#ccc] pl-1 leading-[22px]">01. china_provinces</div>
        <div className="h-full w-[92px] border-l border-[#ccc] pl-1 leading-[22px]">X 113.265128</div>
        <div className="h-full w-[92px] border-l border-[#ccc] pl-1 leading-[22px]">Y 59.768534</div>
        <div className="h-full w-[92px] border-l border-[#ccc] pl-1 leading-[22px]">Z</div>
        <div className="h-[19px] w-[280px] border border-[#bcbcbc] bg-[#e6e6e6]" />
        <svg viewBox="0 0 16 16" className="mt-1 size-4" aria-hidden="true">
          <path d="M11 5h2v2h-2zM7 9h2v2H7zM11 9h2v2h-2zM3 13h2v2H3zM7 13h2v2H7zM11 13h2v2h-2z" fill="#b5b5b5" />
        </svg>
      </footer>
    </div>
  );
}
